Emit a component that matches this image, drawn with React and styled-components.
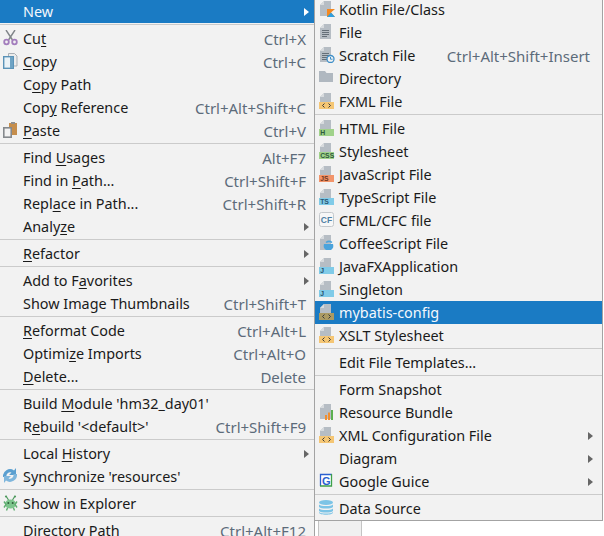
import React from "react";
import styled, { createGlobalStyle } from "styled-components";

const GlobalStyle = createGlobalStyle`
  html, body {
    margin: 0;
    padding: 0;
    background: #fff;
  }
  #root {
    height: 536px;
    overflow: hidden;
  }
`;

const Page = styled.div`
  display: flex;
  align-items: flex-start;
  width: 604px;
  height: 536px;
  overflow: hidden;
  font-family: "Noto Sans", "Open Sans", sans-serif;
  font-size: 14.4px;
  color: #1a1a1a;
`;

const LeftMenu = styled.div`
  flex: none;
  width: 314px;
  background: #f2f2f2;
  border-right: 1px solid #a3a3a3;
`;

const RightColumn = styled.div`
  flex: none;
  width: 288px;
  margin-top: -2px;
  display: flex;
  flex-direction: column;
  height: 538px;
`;

const RightMenu = styled.div`
  background: #f2f2f2;
  border-right: 1px solid #a3a3a3;
  border-bottom: 1px solid #a3a3a3;
`;

const BehindPane = styled.div`
  flex: 1;
  width: 42px;
  margin-left: 3px;
  background: #f0f0f0;
  border-left: 1px solid #c4c4c4;
  border-right: 1px solid #c4c4c4;
`;

const Row = styled.div`
  display: flex;
  align-items: center;
  height: 23px;
  background: ${(p) => (p.$active ? "#1a7bc4" : "transparent")};
  color: ${(p) => (p.$active ? "#f4f8fc" : "inherit")};
  white-space: nowrap;
`;

const IconSlot = styled.span`
  flex: none;
  display: flex;
  align-items: flex-start;
  width: ${(p) => p.$width}px;
  padding: 3px 0 0 ${(p) => p.$pad}px;
  box-sizing: border-box;
  height: 100%;
`;

const Label = styled.span`
  flex: 1;
  line-height: 23px;
`;

const Shortcut = styled.span`
  flex: none;
  font-size: 15px;
  color: #5c6b7a;
  margin-right: ${(p) => p.$right}px;
`;

const Arrow = styled.span`
  flex: none;
  width: 0;
  height: 0;
  margin-right: ${(p) => p.$right}px;
  border-top: 4px solid transparent;
  border-bottom: 4px solid transparent;
  border-left: 5px solid ${(p) => (p.$active ? "#fff" : "#666")};
`;

const Separator = styled.div`
  height: 1px;
  margin: 1px 0 2px;
  background: #cbcbcb;
`;

const Mnemonic = styled.span`
  text-decoration: underline;
  text-underline-offset: 2px;
`;

const FileShape = ({ lines }) => (
  <>
    <path d="M5 0h7v15H1V4z" fill="#b6bdc4" />
    <path d="M1 4l4-4v4z" fill="#d8dbde" />
    {lines && <path d="M3 6.500h7M3 8.500h7M3 10.500h7M3 12.500h5" stroke="#656f78" strokeWidth="1" />}
  </>
);

const BadgeFile = ({ color, text, textColor }) => (
  <svg width="16" height="16" viewBox="0 0 16 16">
    <path d="M5 0h7v9H1V4z" fill="#b6bdc4" />
    <path d="M1 4l4-4v4z" fill="#d8dbde" />
    <rect x="0" y="9" width="15" height="7" fill={color} />
    <text x="1.200" y="15.200" fontSize="6.800" fontWeight="700" fontFamily="Liberation Sans, sans-serif" fill={textColor}>{text}</text>
  </svg>
);

const XmlFile = ({ color = "#f5c674" }) => (
  <svg width="16" height="16" viewBox="0 0 16 16">
    <path d="M5 0h7v9H1V4z" fill="#b6bdc4" />
    <path d="M1 4l4-4v4z" fill="#d8dbde" />
    <rect x="0" y="9" width="15" height="7" fill={color} />
    <path d="M5.500 10.500 3.500 12.500l2 2M9.500 10.500l2 2-2 2" fill="none" stroke="#3c3c3c" strokeWidth="1" />
  </svg>
);

const icons = {
  cut: (
    <svg width="16" height="16" viewBox="0 0 16 16">
      <path d="M3 0l6.500 10M12 0 5.500 10" stroke="#808589" strokeWidth="1.400" fill="none" />
      <circle cx="3.500" cy="12" r="2.300" fill="none" stroke="#a37dbd" strokeWidth="1.800" />
      <circle cx="11.500" cy="12" r="2.300" fill="none" stroke="#a37dbd" strokeWidth="1.800" />
    </svg>
  ),
  copy: (
    <svg width="16" height="16" viewBox="0 0 16 16">
      <path d="M5.500 0.500h6l2.500 2.500v10H5.500z" fill="#ececec" stroke="#a9afb5" />
      <rect x="0.700" y="3.700" width="9.600" height="11.600" fill="#eaf2f7" stroke="#5a93b8" strokeWidth="1.400" />
      <path d="M7 4h3v11H7z" fill="#6ea3c4" />
    </svg>
  ),
  paste: (
    <svg width="16" height="16" viewBox="0 0 16 16">
      <path d="M6 1h8v12H6z" fill="#c68e4c" />
      <path d="M8 0h4v2H8z" fill="#8f8f8f" />
      <rect x="0.800" y="5.800" width="7.400" height="9.400" fill="#f2f2f2" stroke="#85898d" strokeWidth="1.600" />
    </svg>
  ),
  sync: (
    <svg width="16" height="16" viewBox="0 0 16 16">
      <path d="M0 9a7 7 0 0 1 11-6.500L13 0v7H6l2.500-2.500A3.800 3.800 0 0 0 3.500 9z" fill="#5a9fd0" />
      <path d="M14 6a7 7 0 0 1-11 6.500L1 15V8h7l-2.500 2.500A3.800 3.800 0 0 0 10.500 6z" fill="#7fb6dc" />
    </svg>
  ),
  explorer: (
    <svg width="16" height="16" viewBox="0 0 16 16">
      <path d="M3 1l2.500 4M12 1 9.500 5" stroke="#4f9a5f" strokeWidth="1.200" />
      <circle cx="3" cy="1.500" r="1.100" fill="#4f9a5f" />
      <circle cx="12" cy="1.500" r="1.100" fill="#4f9a5f" />
      <ellipse cx="7.500" cy="9" rx="5.500" ry="4.500" fill="#7cc58c" />
      <path d="M1 6.500l2 3-2 3M14 6.500l-2 3 2 3M4.500 13l-1 2.500M10.500 13l1 2.500" stroke="#5fae70" strokeWidth="1.400" fill="none" />
      <circle cx="5.300" cy="8" r="1" fill="#2f5f3a" />
      <circle cx="9.700" cy="8" r="1" fill="#2f5f3a" />
    </svg>
  ),
  kotlin: (
    <svg width="16" height="16" viewBox="0 0 16 16">
      <FileShape />
      <path d="M8 8h8l-4 3.500 4 4.500H8z" fill="#f5881f" />
      <path d="M8 16l4-4.500 4 4.500z" fill="#2e9fe0" />
    </svg>
  ),
  file: (
    <svg width="16" height="16" viewBox="0 0 16 16">
      <FileShape lines />
    </svg>
  ),
  scratch: (
    <svg width="16" height="16" viewBox="0 0 16 16">
      <FileShape lines />
      <circle cx="11.500" cy="12" r="3.500" fill="#f2f2f2" stroke="#3f8fc8" strokeWidth="1.300" />
      <path d="M11.500 10v2.200h2" stroke="#3f8fc8" strokeWidth="1" fill="none" />
    </svg>
  ),
  folder: (
    <svg width="16" height="16" viewBox="0 0 16 16">
      <path d="M0 1h6l1.500 2H14v9H0z" fill="#b0b8c0" />
    </svg>
  ),
  fxml: <XmlFile />,
  html: <BadgeFile color="#a0d28a" text="H" textColor="#2f5a3c" />,
  css: <BadgeFile color="#a0d28a" text="CSS" textColor="#2f5a3c" />,
  js: <BadgeFile color="#f2946a" text="JS" textColor="#6d3620" />,
  ts: <BadgeFile color="#80cbe8" text="TS" textColor="#2a5572" />,
  cfml: (
    <svg width="16" height="16" viewBox="0 0 16 16">
      <rect x="0.500" y="0.500" width="14" height="14" rx="2" fill="#f7f7f7" stroke="#c4c8cc" />
      <text x="1.800" y="11" fontSize="8.500" fontWeight="700" fontFamily="Liberation Sans, sans-serif" fill="#4f7fa5">CF</text>
    </svg>
  ),
  coffee: (
    <svg width="16" height="16" viewBox="0 0 16 16">
      <FileShape />
      <path d="M5 9h9a4.500 5 0 0 1-2 6H7a4.500 5 0 0 1-2-6z" fill="#4aa3dc" />
      <path d="M7 7.500c2-1.500 4-1.500 6 0" stroke="#4aa3dc" strokeWidth="1.500" fill="none" />
    </svg>
  ),
  javafx: <BadgeFile color="#80cbe8" text="J" textColor="#264f6c" />,
  singleton: <BadgeFile color="#80cbe8" text="J" textColor="#264f6c" />,
  mybatis: <XmlFile color="#ab9a62" />,
  xslt: <XmlFile />,
  bundle: (
    <svg width="16" height="16" viewBox="0 0 16 16">
      <FileShape />
      <path d="M6 11h2v5H6z" fill="#f08e30" />
      <path d="M9 8.500h2V16H9z" fill="#f08e30" />
      <path d="M12 6h2v10h-2z" fill="#5cb050" />
    </svg>
  ),
  xml: <XmlFile />,
  guice: (
    <svg width="16" height="16" viewBox="0 0 16 16">
      <rect x="1.500" y="1.500" width="11" height="11" fill="#fff" />
      <path d="M1.500 13V1.500H13" fill="none" stroke="#2a5fd0" strokeWidth="1.300" />
      <path d="M12.500 1v12H1" fill="none" stroke="#3fa04a" strokeWidth="1.300" />
      <text x="3" y="11.500" fontSize="11" fontWeight="700" fontFamily="Liberation Sans, sans-serif" fill="#2a5fd0">G</text>
    </svg>
  ),
  datasource: (
    <svg width="16" height="16" viewBox="0 0 16 16">
      <ellipse cx="7" cy="2.500" rx="7" ry="2.500" fill="#7cc4e6" />
      <path d="M0 4.500c2 2 12 2 14 0V7c-2 2-12 2-14 0z" fill="#7cc4e6" />
      <path d="M0 8.500c2 2 12 2 14 0V11c-2 2-12 2-14 0z" fill="#7cc4e6" />
      <path d="M0 12c2 2 12 2 14 0v.5c0 3-14 3-14 0z" fill="#7cc4e6" />
    </svg>
  ),
};

const leftItems = [
  { label: "New", arrow: true, active: true },
  "-",
  { label: "Cu&t", icon: "cut", keys: "Ctrl+X" },
  { label: "&Copy", icon: "copy", keys: "Ctrl+C" },
  { label: "C&opy Path" },
  { label: "Cop&y Reference", keys: "Ctrl+Alt+Shift+C" },
  { label: "&Paste", icon: "paste", keys: "Ctrl+V" },
  "-",
  { label: "Find &Usages", keys: "Alt+F7" },
  { label: "Find in &Path...", keys: "Ctrl+Shift+F" },
  { label: "Repl&ace in Path...", keys: "Ctrl+Shift+R" },
  { label: "Analy&ze", arrow: true },
  "-",
  { label: "&Refactor", arrow: true },
  "-",
  { label: "Add to F&avorites", arrow: true },
  { label: "Show Image Thumbnails", keys: "Ctrl+Shift+T" },
  "-",
  { label: "&Reformat Code", keys: "Ctrl+Alt+L" },
  { label: "Optimi&ze Imports", keys: "Ctrl+Alt+O" },
  { label: "&Delete...", keys: "Delete" },
  "-",
  { label: "Build &Module 'hm32_day01'" },
  { label: "R&ebuild '<default>'", keys: "Ctrl+Shift+F9" },
  "-",
  { label: "Local &History", arrow: true },
  { label: "Synchronize 'resources'", icon: "sync" },
  "-",
  { label: "Show in Explorer", icon: "explorer" },
  "-",
  { label: "Directory Path", keys: "Ctrl+Alt+F12" },
];

const rightItems = [
  { label: "Kotlin File/Class", icon: "kotlin" },
  { label: "File", icon: "file" },
  { label: "Scratch File", icon: "scratch", keys: "Ctrl+Alt+Shift+Insert" },
  { label: "Directory", icon: "folder" },
  { label: "FXML File", icon: "fxml" },
  "-",
  { label: "HTML File", icon: "html" },
  { label: "Stylesheet", icon: "css" },
  { label: "JavaScript File", icon: "js" },
  { label: "TypeScript File", icon: "ts" },
  { label: "CFML/CFC file", icon: "cfml" },
  { label: "CoffeeScript File", icon: "coffee" },
  { label: "JavaFXApplication", icon: "javafx" },
  { label: "Singleton", icon: "singleton" },
  { label: "mybatis-config", icon: "mybatis", active: true },
  { label: "XSLT Stylesheet", icon: "xslt" },
  "-",
  { label: "Edit File Templates..." },
  "-",
  { label: "Form Snapshot" },
  { label: "Resource Bundle", icon: "bundle" },
  { label: "XML Configuration File", icon: "xml", arrow: true },
  { label: "Diagram", arrow: true },
  { label: "Google Guice", icon: "guice", arrow: true },
  "-",
  { label: "Data Source", icon: "datasource" },
];

// "&" marks the letter that gets underlined, like on windows menus
const renderLabel = (label) => {
  const at = label.indexOf("&");
  if (at < 0) return label;
  return (
    <>
      {label.slice(0, at)}
      <Mnemonic>{label[at + 1]}</Mnemonic>
      {label.slice(at + 2)}
    </>
  );
};

const MenuItems = ({ items, slot, pad, keysRight, arrowRight }) =>
  items.map((item, i) =>
    item === "-" ? (
      <Separator key={i} />
    ) : (
      <Row key={i} $active={item.active}>
        <IconSlot $width={slot} $pad={pad}>{item.icon && icons[item.icon]}</IconSlot>
        <Label>{renderLabel(item.label)}</Label>
        {item.keys && <Shortcut $right={keysRight}>{item.keys}</Shortcut>}
        {item.arrow && <Arrow $active={item.active} $right={arrowRight} />}
      </Row>
    )
  );

export default function App() {
  return (
    <Page>
      <GlobalStyle />
      <LeftMenu>
        <MenuItems items={leftItems} slot={23} pad={3} keysRight={8} arrowRight={5} />
      </LeftMenu>
      <RightColumn>
        <RightMenu>
          <MenuItems items={rightItems} slot={24} pad={4} keysRight={12} arrowRight={9} />
        </RightMenu>
        <BehindPane />
      </RightColumn>
    </Page>
  );
}
